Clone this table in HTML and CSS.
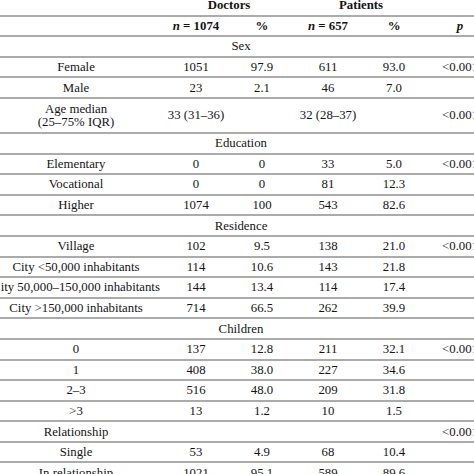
FILE: index.html
```html
<!DOCTYPE html>
<html>
<head>
<meta charset="utf-8">
<link rel="stylesheet" href="styles.css">
</head>
<body>
<table class="stats">
  <colgroup>
    <col class="c-label"><col class="c-num"><col class="c-num"><col class="c-num"><col class="c-num"><col class="c-num">
  </colgroup>
  <tr class="head">
    <td></td><td colspan="2" class="b">Doctors</td><td colspan="2" class="b">Patients</td><td></td>
  </tr>
  <tr class="head">
    <td></td><td class="b"><i>n</i> = 1074</td><td class="b">%</td><td class="b"><i>n</i> = 657</td><td class="b">%</td><td class="b"><i>p</i></td>
  </tr>
  <tr><td colspan="6" class="section">Sex</td></tr>
  <tr><td>Female</td><td>1051</td><td>97.9</td><td>611</td><td>93.0</td><td>&lt;0.001</td></tr>
  <tr><td>Male</td><td>23</td><td>2.1</td><td>46</td><td>7.0</td><td></td></tr>
  <tr class="tall"><td class="two">Age median<br>(25–75% IQR)</td><td>33 (31–36)</td><td></td><td>32 (28–37)</td><td></td><td>&lt;0.001</td></tr>
  <tr><td colspan="6" class="section">Education</td></tr>
  <tr><td>Elementary</td><td>0</td><td>0</td><td>33</td><td>5.0</td><td>&lt;0.001</td></tr>
  <tr><td>Vocational</td><td>0</td><td>0</td><td>81</td><td>12.3</td><td></td></tr>
  <tr><td>Higher</td><td>1074</td><td>100</td><td>543</td><td>82.6</td><td></td></tr>
  <tr><td colspan="6" class="section">Residence</td></tr>
  <tr><td>Village</td><td>102</td><td>9.5</td><td>138</td><td>21.0</td><td>&lt;0.001</td></tr>
  <tr><td>City &lt;50,000 inhabitants</td><td>114</td><td>10.6</td><td>143</td><td>21.8</td><td></td></tr>
  <tr><td>City 50,000–150,000 inhabitants</td><td>144</td><td>13.4</td><td>114</td><td>17.4</td><td></td></tr>
  <tr><td>City &gt;150,000 inhabitants</td><td>714</td><td>66.5</td><td>262</td><td>39.9</td><td></td></tr>
  <tr><td colspan="6" class="section">Children</td></tr>
  <tr><td>0</td><td>137</td><td>12.8</td><td>211</td><td>32.1</td><td>&lt;0.001</td></tr>
  <tr><td>1</td><td>408</td><td>38.0</td><td>227</td><td>34.6</td><td></td></tr>
  <tr><td>2–3</td><td>516</td><td>48.0</td><td>209</td><td>31.8</td><td></td></tr>
  <tr><td>&gt;3</td><td>13</td><td>1.2</td><td>10</td><td>1.5</td><td></td></tr>
  <tr><td>Relationship</td><td></td><td></td><td></td><td></td><td>&lt;0.001</td></tr>
  <tr><td>Single</td><td>53</td><td>4.9</td><td>68</td><td>10.4</td><td></td></tr>
  <tr><td>In relationship</td><td>1021</td><td>95.1</td><td>589</td><td>89.6</td><td></td></tr>
</table>
</body>
</html>
```

FILE: styles.css
```css
html, body {
  margin: 0;
  padding: 0;
  background: #ffffff;
  overflow: hidden;
}

.stats {
  margin-top: -4px;
  margin-left: -11px;
  width: 504px;
  table-layout: fixed;
  border-collapse: separate;
  border-spacing: 0;
  font-family: "Liberation Serif", "Times New Roman", serif;
  font-size: 12.8px;
  color: #141414;
}

.c-label { width: 174px; }
.c-num { width: 66px; }

.stats td {
  height: 17.6px;
  padding: 1px 0 0 0;
  text-align: center;
  vertical-align: middle;
  white-space: nowrap;
  border-bottom: 2px solid #ababab;
  line-height: 13px;
}

.stats tr.tall td {
  height: 32px;
}

.stats td.b {
  font-weight: bold;
}
```
